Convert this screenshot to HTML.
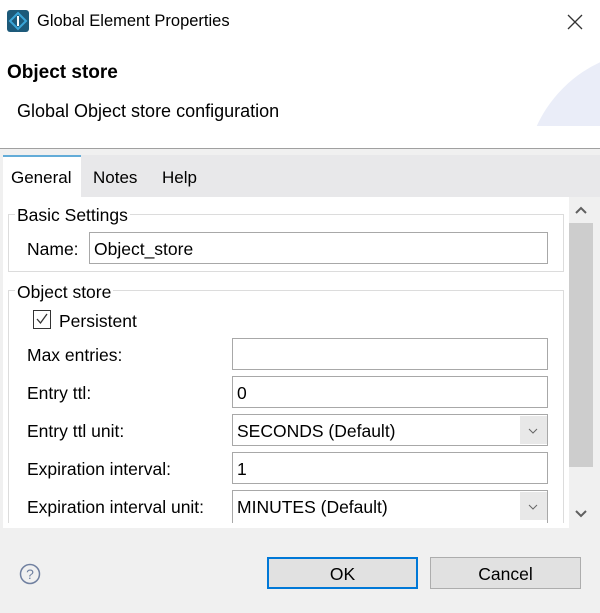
<!DOCTYPE html><html><head><style>
body{margin:0;width:600px;height:613px;position:relative;overflow:hidden;background:#fff;font-family:"Liberation Sans",sans-serif;font-size:17.5px;color:#000}
.a{position:absolute}
.in{position:absolute;left:232px;width:314px;height:30px;border:1px solid #a8a8a8;background:#fff;box-sizing:content-box}
.in span{position:absolute;left:4px;top:0;line-height:32px}
.dd i{position:absolute;right:0;top:1px;width:27px;height:28px;background:#e8e8e8}
.lbl{position:absolute;left:27px}
</style></head><body>
<svg class="a" style="left:7px;top:10px" width="22" height="22"><rect width="22" height="22" rx="3" fill="#1d5a7a"/><path d="M11 3 L19 11 L11 19 L3 11Z" fill="none" stroke="#3aa5d8" stroke-width="2"/><path d="M11 6v10" stroke="#fff" stroke-width="2"/></svg>
<div class="a" style="left:37px;top:12px;font-size:16.5px">Global Element Properties</div>
<svg class="a" style="left:567px;top:14px" width="16" height="16"><path d="M1 1L15 15M15 1L1 15" stroke="#333" stroke-width="1.3"/></svg>
<div class="a" style="left:520px;top:45px;width:80px;height:81px;overflow:hidden"><div class="a" style="left:5px;top:5px;width:260px;height:260px;border-radius:50%;background:#eaedf8"></div></div>
<div class="a" style="left:7px;top:62px;font-weight:bold;font-size:19px">Object store</div>
<div class="a" style="left:17px;top:101px;font-size:18px">Global Object store configuration</div>
<div class="a" style="left:0;top:148px;width:600px;height:1px;background:#a0a0a0"></div>
<div class="a" style="left:0;top:149px;width:600px;height:464px;background:#f0f0f0"></div>
<div class="a" style="left:3px;top:155px;width:597px;height:42px;background:#e8e8ea"></div>
<div class="a" style="left:3px;top:155px;width:78px;height:42px;background:#fff;border-top:2px solid #63acd8;box-sizing:border-box"></div>
<div class="a" style="left:11px;top:168px;font-size:17px">General</div>
<div class="a" style="left:93px;top:168px;font-size:17px">Notes</div>
<div class="a" style="left:162px;top:168px;font-size:17px">Help</div>
<div class="a" style="left:3px;top:197px;width:566px;height:331px;background:#fff;overflow:hidden">
 <div class="a" style="left:5px;top:17px;width:554px;height:56px;border:1px solid #dcdcdc"></div>
 <div class="a" style="left:12px;top:8px;background:#fff;padding:0 2px">Basic Settings</div>
 <div class="lbl" style="left:24px;top:42px">Name:</div>
 <div class="in" style="left:86px;top:35px;width:457px"><span>Object_store</span></div>
 <div class="a" style="left:5px;top:93px;width:554px;height:300px;border:1px solid #dcdcdc"></div>
 <div class="a" style="left:12px;top:85px;background:#fff;padding:0 2px">Object store</div>
 <div class="a" style="left:30px;top:113px;width:16px;height:17px;border:1px solid #333"></div>
 <svg class="a" style="left:32px;top:115px" width="14" height="14"><path d="M2 7L5.5 11L12 2" fill="none" stroke="#333" stroke-width="1.3"/></svg>
 <div class="a" style="left:56px;top:114px">Persistent</div>
</div>
<div class="lbl" style="top:345px">Max entries:</div>
<div class="in" style="top:338px"></div>
<div class="lbl" style="top:383px">Entry ttl:</div>
<div class="in" style="top:376px"><span>0</span></div>
<div class="lbl" style="top:421px">Entry ttl unit:</div>
<div class="in dd" style="top:414px"><span>SECONDS (Default)</span><i></i><svg class="a" style="right:9px;top:12px" width="10" height="8"><path d="M1 2L5 6L9 2" fill="none" stroke="#666"/></svg></div>
<div class="lbl" style="top:459px">Expiration interval:</div>
<div class="in" style="top:452px"><span>1</span></div>
<div class="lbl" style="top:497px">Expiration interval unit:</div>
<div class="in dd" style="top:490px;height:32px"><span>MINUTES (Default)</span><i></i><svg class="a" style="right:9px;top:12px" width="10" height="8"><path d="M1 2L5 6L9 2" fill="none" stroke="#666"/></svg></div>
<div class="a" style="left:3px;top:523px;width:566px;height:5px;background:#fff"></div>
<div class="a" style="left:569px;top:197px;width:24px;height:331px;background:#f0f0f0"></div>
<div class="a" style="left:569px;top:223px;width:24px;height:244px;background:#cdcdcd"></div>
<svg class="a" style="left:574px;top:205px" width="14" height="10"><path d="M2 8L7 3L12 8" fill="none" stroke="#606060" stroke-width="2"/></svg>
<svg class="a" style="left:574px;top:509px" width="14" height="10"><path d="M2 2L7 7L12 2" fill="none" stroke="#606060" stroke-width="2"/></svg>
<svg class="a" style="left:19px;top:563px" width="22" height="22"><circle cx="11" cy="11" r="9.5" fill="none" stroke="#7080a0" stroke-width="1.5"/><text x="11" y="16" font-size="14" text-anchor="middle" fill="#7080a0" font-family="Liberation Sans">?</text></svg>
<div class="a" style="left:267px;top:557px;width:151px;height:32px;border:2px solid #0078d7;box-sizing:border-box;background:#e1e1e1;text-align:center;line-height:30px;font-size:17.5px">OK</div>
<div class="a" style="left:430px;top:557px;width:151px;height:32px;border:1px solid #adadad;box-sizing:border-box;background:#e1e1e1;text-align:center;line-height:32px;font-size:17.5px">Cancel</div>
</body></html>
